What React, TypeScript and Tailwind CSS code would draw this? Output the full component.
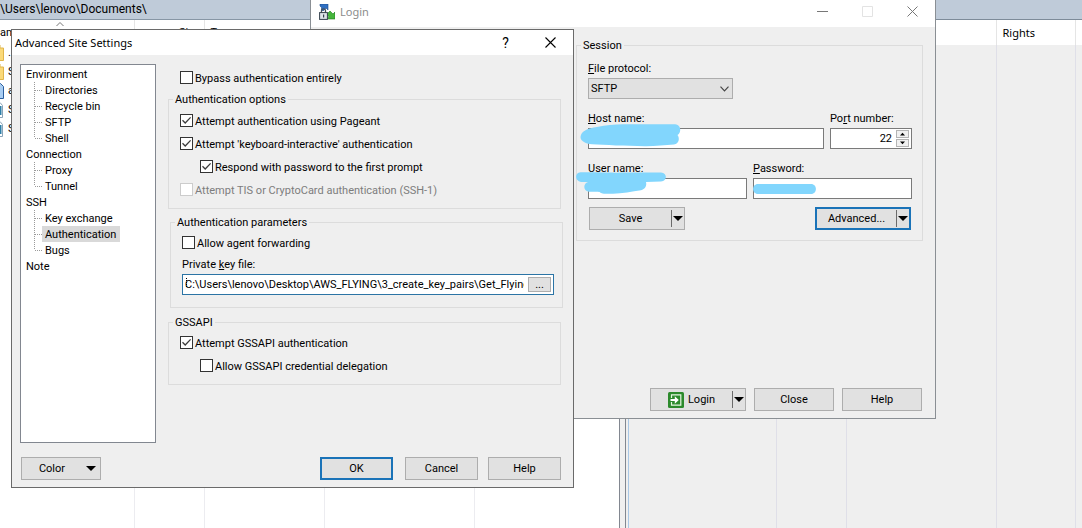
import React, { type ReactNode } from "react";

function Legend({ children }: { children: ReactNode }) {
  return <legend className="ml-1 h-[14px] px-[2px] leading-4">{children}</legend>;
}

function Group({ title, className = "", children }: { title: string; className?: string; children: ReactNode }) {
  return (
    <fieldset className={`min-w-0 border border-[#dcdcdc] ${className}`}>
      <Legend>{title}</Legend>
      {children}
    </fieldset>
  );
}

function Check({
  label,
  checked = false,
  disabled = false,
  nested = false,
}: {
  label: string;
  checked?: boolean;
  disabled?: boolean;
  nested?: boolean;
}) {
  return (
    <label
      className={`flex h-[23px] items-center gap-[2px] ${nested ? "pl-[31px]" : "pl-[11px]"} ${disabled ? "text-[#7d7d7d]" : ""}`}
    >
      <span className="grid size-[13px] shrink-0">
        <input
          type="checkbox"
          defaultChecked={checked}
          disabled={disabled}
          className={`peer col-start-1 row-start-1 size-[13px] appearance-none border bg-white ${disabled ? "border-[#cccccc]" : "border-[#333333]"}`}
        />
        <svg
          viewBox="0 0 13 13"
          className="pointer-events-none col-start-1 row-start-1 hidden size-[13px] peer-checked:block"
          fill="none"
          stroke="#3c3c3c"
          strokeWidth="1.3"
        >
          <path d="M2.5 6.3 5.2 9 10.6 3.4" />
        </svg>
      </span>
      <span className="pt-[2px] whitespace-nowrap">{label}</span>
    </label>
  );
}

const btn = "flex h-[23px] items-center justify-center bg-[#e1e1e1]";
const plain = "border border-[#adadad]";
const primary = "border-2 border-[#1a73b8]";

function Triangle() {
  return (
    <svg viewBox="0 0 10 5" className="h-[5px] w-[10px] shrink-0" fill="#000">
      <path d="M0 0h10L5 5z" />
    </svg>
  );
}

function SplitButton({ label, focus = false, icon }: { label: string; focus?: boolean; icon?: ReactNode }) {
  return (
    <button type="button" className={`${btn} ${focus ? primary : plain} w-[96px]`}>
      <span className="flex flex-1 items-center justify-center gap-1">
        {icon}
        {label}
      </span>
      <span className="flex h-[17px] items-center border-l border-[#6b6b6b] pl-[1px] pr-[1px]">
        <Triangle />
      </span>
    </button>
  );
}

const tree = [
  { name: "Environment", items: ["Directories", "Recycle bin", "SFTP", "Shell"] },
  { name: "Connection", items: ["Proxy", "Tunnel"] },
  { name: "SSH", items: ["Key exchange", "Authentication", "Bugs"] },
  { name: "Note", items: [] },
];

function SettingsTree() {
  return (
    <nav className="w-[136px] shrink-0 border border-[#828790] bg-white pt-[1px]">
      <ul>
        {tree.map((g) => (
          <li key={g.name}>
            <div className="h-4 pl-[5px] leading-[18px]">{g.name}</div>
            <ul className="pl-[13px]">
              {g.items.map((item, i) => (
                <li key={item} className="flex h-4 items-center">
                  <svg viewBox="0 0 8 16" className="h-4 w-2 shrink-0" stroke="#9a9a9a" strokeDasharray="1 1">
                    <path d={i === g.items.length - 1 ? "M.5 0V8M1 8.500H8" : "M.5 0V16M1 8.500H8"} />
                  </svg>
                  <a
                    href="#"
                    className={`block h-4 pl-[3px] pr-[4px] leading-[18px] whitespace-nowrap ${item === "Authentication" ? "bg-[#d9d9d9]" : ""}`}
                  >
                    {item}
                  </a>
                </li>
              ))}
            </ul>
          </li>
        ))}
      </ul>
    </nav>
  );
}

function AdvancedDialog() {
  return (
    <section
      aria-label="Advanced Site Settings"
      className="absolute left-[11px] top-[29px] w-[563px] border border-[#6a6a6a] bg-[#efefef]"
    >
      <header className="flex h-[25px] items-center bg-white pl-[3px]">
        <h1 className="flex-1 font-['Noto_Sans',sans-serif] text-[11px]">Advanced Site Settings</h1>
        <button type="button" aria-label="Context help" className="grid w-[45px] place-items-center text-[14px] leading-4">
          ?
        </button>
        <button type="button" aria-label="Close" className="grid w-[45px] place-items-center">
          <svg viewBox="0 0 11 11" className="size-[11px]" stroke="#000" strokeWidth="1.1">
            <path d="M.5 .5l10 10M10.500 .5l-10 10" />
          </svg>
        </button>
      </header>
      <div className="flex gap-3 pb-[14px] pl-2 pr-[10px] pt-[9px]">
        <SettingsTree />
        <form className="min-w-0 flex-1 pb-[58px] pt-[2px]">
          <div className="mr-[2px]">
            <div className="pl-px">
              <Check label="Bypass authentication entirely" />
            </div>
            <Group title="Authentication options" className="mt-[3px] pb-[7px]">
              <div className="pt-[3px]">
                <Check label="Attempt authentication using Pageant" checked />
                <Check label="Attempt 'keyboard-interactive' authentication" checked />
                <Check label="Respond with password to the first prompt" checked nested />
                <Check label="Attempt TIS or CryptoCard authentication (SSH-1)" disabled />
              </div>
            </Group>
          </div>
          <Group title="Authentication parameters" className="ml-[2px] mt-[6px] pb-3">
            <div className="pt-[2px]">
              <Check label="Allow agent forwarding" />
              <label htmlFor="keyfile" className="block h-5 pl-[11px] leading-[22px]">
                Private <u>k</u>ey file:
              </label>
              <div className="relative ml-[11px] mr-2 flex h-[21px] items-center border border-[#2b74a5] bg-white pl-[2px] pr-[2px]">
                <span className="absolute left-[3px] top-[3px] h-[9px] border-l border-dotted border-black" />
                <input
                  id="keyfile"
                  defaultValue="C:\Users\lenovo\Desktop\AWS_FLYING\3_create_key_pairs\Get_Flying"
                  className="min-w-0 flex-1 bg-transparent text-[11px] outline-none"
                />
                <button type="button" aria-label="Browse" className="ml-1 h-[15px] w-[23px] border border-[#adadad] bg-[#e1e1e1] leading-[13px]">
                  ...
                </button>
              </div>
            </div>
          </Group>
          <div className="mr-[2px]">
            <Group title="GSSAPI" className="mt-[7px] pb-[7px]">
              <div className="pt-[2px]">
                <Check label="Attempt GSSAPI authentication" checked />
                <Check label="Allow GSSAPI credential delegation" nested />
              </div>
            </Group>
          </div>
        </form>
      </div>
      <footer className="flex pb-[7px] pl-[9px] pr-3">
        <button type="button" className={`${btn} ${plain} w-[80px] pr-1`}>
          <span className="flex-1 pr-1">Color</span>
          <Triangle />
        </button>
        <button type="button" className={`${btn} ${primary} ml-auto w-[73px]`}>
          OK
        </button>
        <button type="button" className={`${btn} ${plain} ml-3 w-[73px]`}>
          Cancel
        </button>
        <button type="button" className={`${btn} ${plain} ml-[10px] w-[73px]`}>
          Help
        </button>
      </footer>
    </section>
  );
}

const field = "block h-[21px] w-full border border-[#7a7a7a] bg-white px-1 text-[11px] outline-none";
const fieldLabel = "block h-5 leading-[22px] whitespace-nowrap";

function LoginDialog() {
  return (
    <section aria-label="Login" className="absolute left-[310px] top-0 w-[626px] border-x border-b border-[#8a8f94] bg-[#efefef]">
      <header className="flex h-[27px] items-center bg-white pb-1 pl-2 text-[#8c8c8c]">
        <svg viewBox="0 0 16 16" className="size-4 shrink-0">
          <path d="M1 0h8v6L7 4 4 7 2 5 3 4 1 2z" fill="#2f6fc2" stroke="#1c4a8a" strokeWidth=".6" />
          <path d="M16 15H8l2-2-2-3 3-3 3 3 2-2z" fill="#45b53c" stroke="#1f7a1c" strokeWidth=".6" />
          <path d="M2.500 9V6.800a2 2 0 0 1 4 0V9" fill="none" stroke="#44505c" strokeWidth="1.300" />
          <rect x=".6" y="8.600" width="7.800" height="6.800" fill="#dfe5ea" stroke="#34404c" />
          <path d="M4 10.500h1.200v3H4z" fill="#34404c" />
        </svg>
        <h2 className="ml-[5px] flex-1 font-['Noto_Sans',sans-serif] text-[11px]">Login</h2>
        <button type="button" aria-label="Minimize" className="grid w-[45px] place-items-center">
          <svg viewBox="0 0 11 11" className="size-[11px]" stroke="#777">
            <path d="M0 5.500h11" />
          </svg>
        </button>
        <button type="button" aria-label="Maximize" className="grid w-[45px] place-items-center">
          <svg viewBox="0 0 11 11" className="size-[11px]" fill="none" stroke="#e3e3e3">
            <path d="M.5 .5h10v10H.5z" />
          </svg>
        </button>
        <button type="button" aria-label="Close" className="grid w-[45px] place-items-center">
          <svg viewBox="0 0 11 11" className="size-[11px]" stroke="#777">
            <path d="M.5 .5l10 10M10.500 .5l-10 10" />
          </svg>
        </button>
      </header>
      <form className="ml-auto flex min-h-[391px] w-[359px] flex-col justify-between pb-[7px] pr-3 pt-[11px]">
        <Group title="Session" className="pb-[10px]">
          <div className="flex flex-col gap-[9px] pl-[11px] pr-[10px] pt-[6px]">
            <div className="w-[145px]">
              <label htmlFor="proto" className={fieldLabel}>
                <u>F</u>ile protocol:
              </label>
              <div className="grid">
                <select
                  id="proto"
                  className="col-start-1 row-start-1 h-[21px] w-full appearance-none border border-[#adadad] bg-[#e1e1e1] px-[2px] text-[11px] outline-none"
                >
                  <option>SFTP</option>
                </select>
                <svg
                  viewBox="0 0 9 6"
                  className="pointer-events-none col-start-1 row-start-1 mr-[4px] h-[6px] w-[9px] self-center justify-self-end"
                  fill="none"
                  stroke="#444"
                  strokeWidth="1.200"
                >
                  <path d="M.5 .7 4.500 4.800 8.500 .7" />
                </svg>
              </div>
            </div>
            <div className="flex gap-[6px]">
              <div className="flex-1">
                <label htmlFor="host" className={fieldLabel}>
                  <u>H</u>ost name:
                </label>
                <input id="host" className={field} />
              </div>
              <div className="w-[82px]">
                <label htmlFor="port" className={fieldLabel}>
                  Po<u>r</u>t number:
                </label>
                <div className="flex h-[21px] items-center border border-[#7a7a7a] bg-white pr-[2px]">
                  <input id="port" defaultValue="22" className="min-w-0 flex-1 bg-transparent pr-1 text-right text-[11px] outline-none" />
                  <div className="flex flex-col gap-[1px]">
                    <button type="button" aria-label="Increase port" className="grid h-2 w-[13px] place-items-center border border-[#b4b4b4] bg-[#f0f0f0]">
                      <svg viewBox="0 0 7 4" className="h-1 w-[7px]">
                        <path d="M1 3.500h5L3.500 .8z" />
                      </svg>
                    </button>
                    <button type="button" aria-label="Decrease port" className="grid h-2 w-[13px] place-items-center border border-[#b4b4b4] bg-[#f0f0f0]">
                      <svg viewBox="0 0 7 4" className="h-1 w-[7px]">
                        <path d="M1 .5h5L3.500 3.200z" />
                      </svg>
                    </button>
                  </div>
                </div>
              </div>
            </div>
            <div className="grid grid-cols-2 gap-[6px]">
              <div>
                <label htmlFor="user" className={fieldLabel}>
                  <u>U</u>ser name:
                </label>
                <input id="user" className={field} />
              </div>
              <div>
                <label htmlFor="pass" className={fieldLabel}>
                  <u>P</u>assword:
                </label>
                <input id="pass" type="password" className={field} />
              </div>
            </div>
            <div className="-mt-px flex justify-between px-px">
              <SplitButton label="Save" />
              <SplitButton label="Advanced..." focus />
            </div>
          </div>
        </Group>
        <footer className="flex justify-end gap-2 pr-px">
          <SplitButton
            label="Login"
            icon={
              <svg viewBox="0 0 16 16" className="size-4 shrink-0">
                <rect width="16" height="16" rx="1.500" fill="#2c8a2c" />
                <path d="M3.500 6V2.800h9.300v10.400H3.500V10" fill="none" stroke="#e6f7e2" strokeWidth="1.200" />
                <path d="M2.500 7h4.300V4.300L10.800 8l-4 3.700V9H2.500z" fill="#fff" />
              </svg>
            }
          />
          <button type="button" className={`${btn} ${plain} w-[80px]`}>
            Close
          </button>
          <button type="button" className={`${btn} ${plain} w-[80px]`}>
            Help
          </button>
        </footer>
      </form>
      <svg viewBox="311 0 624 418" className="pointer-events-none absolute left-0 top-0 h-[418px] w-[624px]" fill="#82d6fd">
        <path d="M580.500 137C581 131 588 128 597 127C607 125 615 124 626 124.200H675C679 124.500 681 128 680 131.500C679.500 133.500 678.500 134.500 677.500 135C680 138 679 144 674 144.500C665 145 655 146.300 645 146.200C625 146 605 145 592 144.300C585 143.500 580.500 141 580.500 137Z" />
        <path d="M580.500 172.300C600 172 612 173 625 172.500H661C667.500 173 667.500 181 661 181.500L646 182C647 186 645 189 641 190.200C632 191.500 622 193.500 613 193.800H604C600 193.500 601 192 598 191.800H589C584 191 583 186 586 183L588 182H581C574.500 181 574.500 172.500 580.500 172.300Z" />
        <path d="M758 184h53c6.500 0 6.500 10 0 10h-53c-6.500 0-6.500-10 0-10z" />
      </svg>
    </section>
  );
}

function Glyph({ kind }: { kind: string }) {
  return (
    <svg viewBox="12 0 4 16" className="h-4 w-1 shrink-0">
      {kind === "folder" && <path d="M0 0H12V3h3.500V15.500H0z" fill="#fbd978" stroke="#e0b54a" />}
      {kind === "doc" && <path d="M0 .5h12.500l3 3v12H0z" fill="#a9cdf2" stroke="#2c5f9e" />}
      {kind === "image" && (
        <>
          <path d="M0 .5h12l2.500 3v12H0z" fill="#fff" stroke="#8aa4b8" />
          <path d="M0 4h13.500v9H0z" fill="#2f7fa8" />
        </>
      )}
    </svg>
  );
}

const files = [
  { kind: "folder", name: ".." },
  { kind: "folder", name: "S" },
  { kind: "doc", name: "a" },
  { kind: "image", name: "S" },
  { kind: "image", name: "S" },
];

const th = "h-[25px] border-r border-[#e5e5e5] p-0 text-left align-middle text-[11px] font-normal";
const line = "border-r border-[#ececf0] p-0";
const remoteLine = "border-r border-[#dfdfe8] p-0";

export default function App() {
  return (
    <main className="relative flex h-screen min-h-[528px] flex-col overflow-hidden bg-[#f0f0f0] font-['Roboto',sans-serif] text-[11px] leading-[14px] text-black">
      <div className="flex min-h-0 flex-1">
        <div className="flex w-[620px] shrink-0 flex-col border-r border-[#828790] bg-white">
          <div className="h-5 border-b border-[#8796a5] bg-[#bfcbd9] text-[12px] leading-[18px]">
            \Users\lenovo\Documents\
          </div>
          <table className="w-full flex-1 table-fixed border-collapse">
            <colgroup>
              <col className="w-[134px]" />
              <col className="w-[70px]" />
              <col className="w-[120px]" />
              <col className="w-[150px]" />
              <col />
            </colgroup>
            <thead>
              <tr>
                <th className={`${th} relative`}>
                  <span className="block leading-[16px]">ame</span>
                  <svg viewBox="0 0 8 4" className="absolute left-[56px] top-[2px] h-1 w-2" fill="none" stroke="#777">
                    <path d="M.5 4 4 .5 7.500 4" />
                  </svg>
                </th>
                <th className={`${th} pr-1 text-right`}>Size</th>
                <th className={`${th} pl-[6px]`}>Type</th>
                <th className={th} />
                <th className="p-0" />
              </tr>
            </thead>
            <tbody>
              {files.map((f, i) => (
                <tr key={i} className="h-[19px]">
                  <td className={`${line} align-top`}>
                    <span className="flex items-center gap-1">
                      <Glyph kind={f.kind} />
                      {f.name}
                    </span>
                  </td>
                  <td className={line} />
                  <td className={line} />
                  <td className={line} />
                  <td />
                </tr>
              ))}
              <tr className="h-full">
                <td className={line} />
                <td className={line} />
                <td className={line} />
                <td className={line} />
                <td />
              </tr>
            </tbody>
          </table>
        </div>
        <div className="w-[5px] shrink-0" />
        <div className="flex min-w-0 flex-1 flex-col border-l border-[#828790]">
          <div className="h-5 shrink-0 border-b border-[#7d8b99] bg-[#bfcbd9]" />
          <div className="ml-[2px] flex min-h-0 flex-1 border-l border-[#a9c8e6]">
            <table className="h-full w-full table-fixed border-collapse bg-[#efefef]">
              <colgroup>
                <col className="w-[147px]" />
                <col className="w-[70px]" />
                <col className="w-[150px]" />
                <col className="w-[79px]" />
                <col />
              </colgroup>
              <thead className="bg-white">
                <tr>
                  <th className={th} />
                  <th className={th} />
                  <th className={th} />
                  <th className={`${th} pl-[6px] font-['Noto_Sans',sans-serif]`}>Rights</th>
                  <th className="p-0" />
                </tr>
              </thead>
              <tbody>
                <tr className="h-full">
                  <td className={remoteLine} />
                  <td className={remoteLine} />
                  <td className={remoteLine} />
                  <td className={remoteLine} />
                  <td />
                </tr>
              </tbody>
            </table>
          </div>
        </div>
      </div>
      <LoginDialog />
      <AdvancedDialog />
    </main>
  );
}
